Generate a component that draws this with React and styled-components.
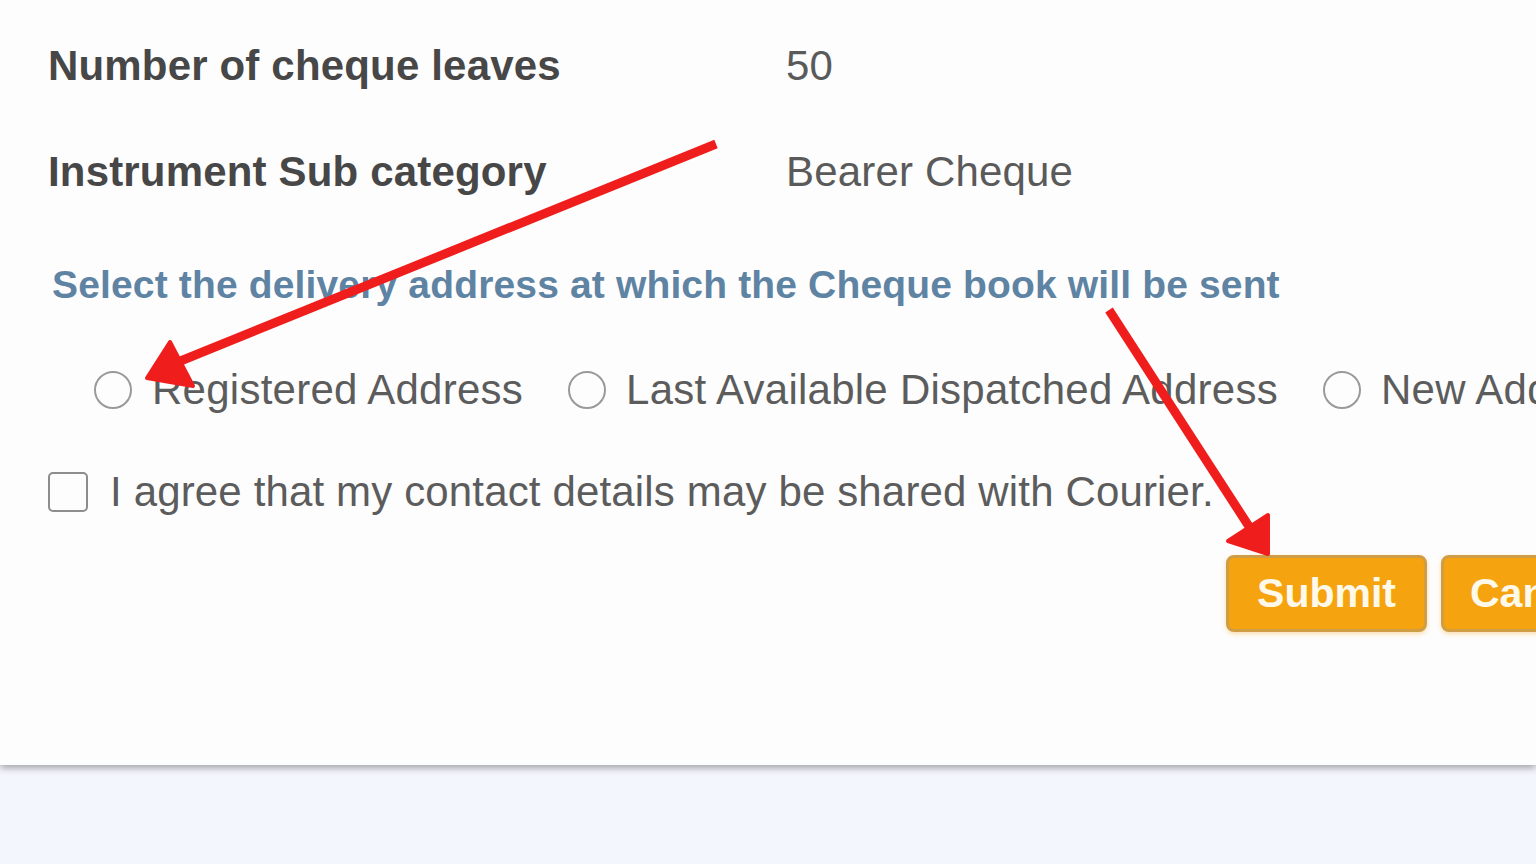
import styled, {createGlobalStyle} from 'styled-components'

const GlobalStyle = createGlobalStyle`
  html, body {
    margin: 0;
    padding: 0;
    background: #f4f6fd;
    overflow: hidden;
  }
  body {
    font-family: "Liberation Sans", Arial, sans-serif;
  }
`

const Page = styled.div`
  position: relative;
  width: 1536px;
  height: 864px;
  overflow: hidden;
`

const Card = styled.div`
  background: #fdfdfe;
  box-shadow: 0 3px 7px rgba(0, 0, 0, 0.34);
  overflow: hidden;
`

const Form = styled.div`
  width: 1594px;
  padding: 42px 0 133px 48px;
  display: flex;
  flex-direction: column;
`

const DetailRow = styled.div`
  display: grid;
  grid-template-columns: 738px 1fr;
  height: 48px;
  line-height: 48px;
  font-size: 42px;
  letter-spacing: 0.17px;
  margin-bottom: ${p => p.$gap || 0}px;
`

const Label = styled.div`
  font-weight: 700;
  color: #474747;
`

const Value = styled.div`
  color: #5a5a5a;
`

const Heading = styled.div`
  margin: 0 0 57px 4px;
  height: 48px;
  line-height: 48px;
  font-size: 39px;
  font-weight: 700;
  letter-spacing: 0.15px;
  color: #5f84a3;
  white-space: nowrap;
`

const RadioGroup = styled.div`
  display: flex;
  align-items: center;
  gap: 45px;
  padding-left: 46px;
  height: 48px;
  margin-bottom: 54px;
  white-space: nowrap;
`

const Option = styled.label`
  display: flex;
  align-items: center;
  gap: 20px;
  font-size: 42px;
  letter-spacing: 0.25px;
  color: #5c5c5c;
`

const Radio = styled.span`
  width: 38px;
  height: 38px;
  box-sizing: border-box;
  border: 2.5px solid #9a9a9a;
  border-radius: 50%;
  flex: none;
`

const Agree = styled.label`
  display: flex;
  align-items: center;
  gap: 22px;
  height: 48px;
  font-size: 42px;
  letter-spacing: 0.15px;
  color: #5c5c5c;
  white-space: nowrap;
  margin-bottom: 39px;
`

const Box = styled.span`
  width: 40px;
  height: 40px;
  box-sizing: border-box;
  border: 2.5px solid #8d8d8d;
  border-radius: 5px;
  flex: none;
`

const Buttons = styled.div`
  display: flex;
  justify-content: flex-end;
  gap: 14px;
`

const Button = styled.button`
  width: 201px;
  height: 77px;
  box-sizing: border-box;
  background: #f5a30f;
  border: 3px solid #cf9d45;
  border-radius: 8px;
  box-shadow: 0 2px 5px rgba(245, 163, 15, 0.35);
  color: #fff9ea;
  font-family: "Liberation Sans", Arial, sans-serif;
  font-size: 41px;
  font-weight: 700;
  text-align: ${p => (p.$cut ? 'left' : 'center')};
  padding: 0 0 0 ${p => (p.$cut ? 26 : 0)}px;
  cursor: pointer;
`

const Annotations = styled.svg`
  position: absolute;
  left: 0;
  top: 0;
  pointer-events: none;
`

export default function App() {
  return (
    <Page>
      <GlobalStyle/>
      <Card>
        <Form>
          <DetailRow $gap={58}>
            <Label>Number of cheque leaves</Label>
            <Value>50</Value>
          </DetailRow>
          <DetailRow $gap={65}>
            <Label>Instrument Sub category</Label>
            <Value>Bearer Cheque</Value>
          </DetailRow>
          <Heading>Select the delivery address at which the Cheque book will be sent</Heading>
          <RadioGroup>
            <Option><Radio/>Registered Address</Option>
            <Option><Radio/>Last Available Dispatched Address</Option>
            <Option><Radio/>New Address</Option>
          </RadioGroup>
          <Agree><Box/>I agree that my contact details may be shared with Courier.</Agree>
          <Buttons>
            <Button>Submit</Button>
            <Button $cut>Cancel</Button>
          </Buttons>
        </Form>
      </Card>
      <Annotations width="1536" height="864" viewBox="0 0 1536 864">
        <g fill="#f01d1d" stroke="#f01d1d" strokeLinejoin="round">
          <line x1="716" y1="144" x2="178" y2="362" strokeWidth="9"/>
          <polygon points="147,378 170,342 193,386" strokeWidth="4"/>
          <line x1="1109" y1="310" x2="1250" y2="528" strokeWidth="9"/>
          <polygon points="1268,554 1228,541 1268,515" strokeWidth="4"/>
        </g>
      </Annotations>
    </Page>
  )
}
